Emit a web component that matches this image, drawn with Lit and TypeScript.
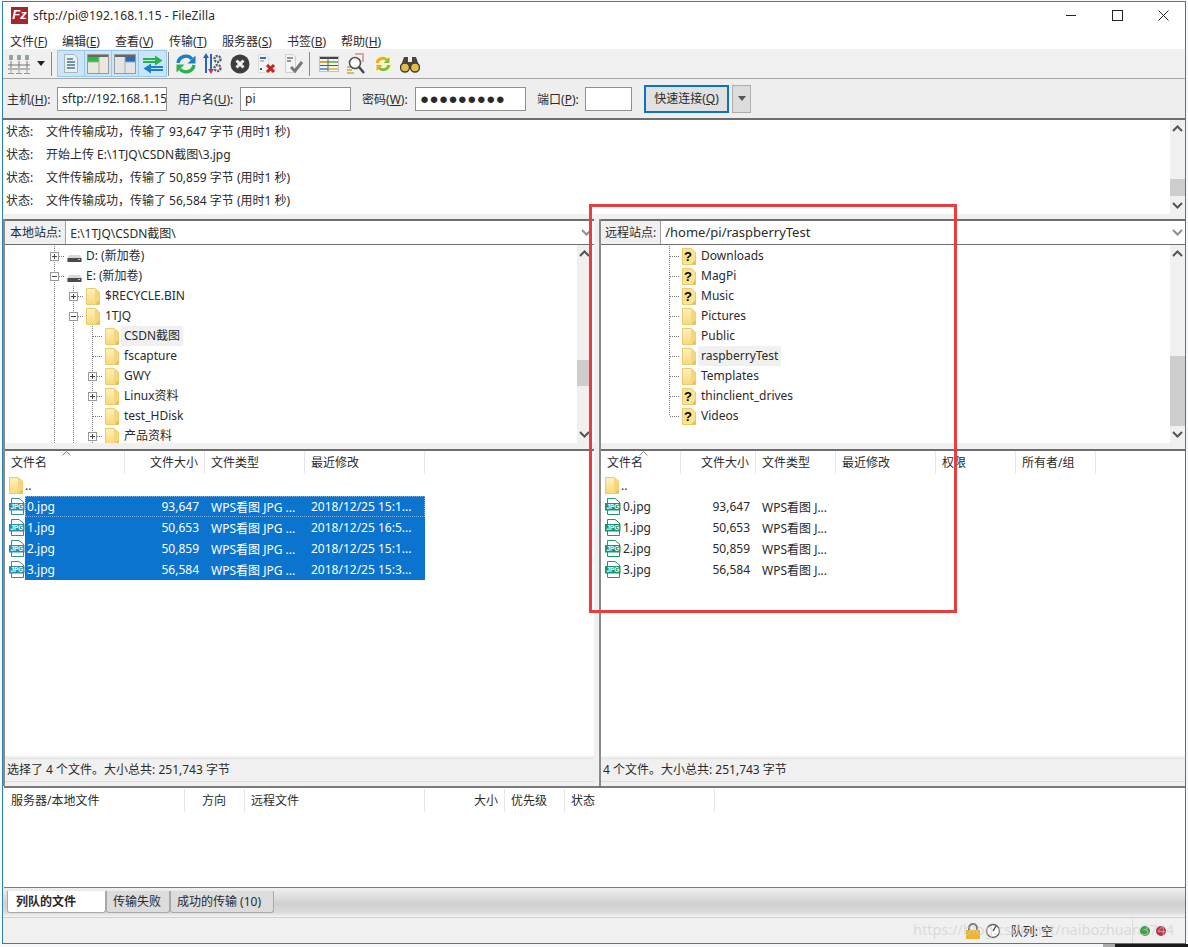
import { LitElement, css, html, svg } from "lit";
import { customElement } from "lit/decorators.js";

const folder = () => svg`<svg class="ico" width="14" height="17" viewBox="0 0 14 17">
  <defs><linearGradient id="fg" x1="0" y1="0" x2="0" y2="1"><stop offset="0" stop-color="#fff0bd"/><stop offset="1" stop-color="#f9d878"/></linearGradient></defs>
  <path d="M.5.5H9L13.5 4V16.5H.5Z" fill="url(#fg)" stroke="#eccb6c"/>
  <path d="M9 .5V16.5H13.5V4Z" fill="#f6d67c"/>
  <path d="M13.5 12L9.5 16.5H13.5Z" fill="#e6bd55"/>
</svg>`;

const unknownFolder = () => svg`<svg class="ico" width="14" height="17" viewBox="0 0 14 17">
  <path d="M.5.5H9L13.5 4V16.5H.5Z" fill="#fbe28e" stroke="#eccb6c"/>
  <path d="M13.5 12L9.5 16.5H13.5Z" fill="#e6bd55"/>
  <text x="6" y="13" text-anchor="middle" font-family="Liberation Sans" font-weight="700" font-size="13" fill="#000">?</text>
</svg>`;

const drive = () => svg`<svg class="ico" width="15" height="14" viewBox="0 0 15 14">
  <path d="M2 6H13L14.5 9V13H.5V9Z" fill="#d8d8d8"/>
  <rect x=".5" y="9" width="14" height="4" fill="#4a4a4a"/>
  <rect x="11" y="10" width="2" height="1" fill="#9fe08f"/>
</svg>`;

const jpg = (color: string) => svg`<svg class="ico" width="16" height="17" viewBox="0 0 16 17">
  <path d="M2.5.5H10L14.5 4V16.5H2.5Z" fill="#fff" stroke=${color}/>
  <rect x="0" y="5" width="15.5" height="7.5" fill=${color}/>
  <text x="7.8" y="11" text-anchor="middle" font-family="Liberation Sans" font-weight="700" font-size="6.4" fill="#fff">JPG</text>
</svg>`;

const chevron = (up: boolean) => svg`<svg width="11" height="7" viewBox="0 0 11 7">
  <path d=${up ? "M1 6L5.5 1.5L10 6" : "M1 1L5.5 5.5L10 1"} fill="none" stroke="#555" stroke-width="2"/>
</svg>`;

const toolIcons = [
  svg`<svg width="24" height="22" viewBox="0 0 24 22">
    <g fill="#8fa79a"><rect x="2" y="2" width="4" height="5"/><rect x="10" y="2" width="4" height="5"/><rect x="18" y="2" width="4" height="5"/></g>
    <g fill="none" stroke="#777"><path d="M4 8V15M12 8V15M20 8V15M1 12H23M1 16H23"/><path d="M4 17V20M12 17V20M20 17V20M1 20.5H7M9 20.5H15M17 20.5H23" stroke="#999"/></g>
  </svg>`,
  svg`<svg width="18" height="21" viewBox="0 0 18 21">
    <path d="M2.5 1.5H12L15.5 5V19.5H2.5Z" fill="#e9f1f7" stroke="#a9b4bd"/>
    <path d="M5 6H11M5 9H13M5 12H13M5 15H13" stroke="#52758f" stroke-width="1.4"/>
    <path d="M5 9H9M5 15H8" stroke="#4aa860" stroke-width="1.4"/>
  </svg>`,
  svg`<svg width="22" height="20" viewBox="0 0 22 20">
    <rect x=".5" y=".5" width="21" height="19" fill="#e8e8dc" stroke="#999"/>
    <rect x="1" y="1" width="20" height="2" fill="#666"/>
    <rect x="1" y="3" width="11" height="5" fill="#2dbb3f"/>
    <path d="M12 3V19M12 8H1" stroke="#aaa"/>
  </svg>`,
  svg`<svg width="22" height="20" viewBox="0 0 22 20">
    <rect x=".5" y=".5" width="21" height="19" fill="#e2e4e6" stroke="#999"/>
    <rect x="1" y="1" width="20" height="2" fill="#666"/>
    <rect x="11" y="3" width="10" height="5" fill="#1f6fc0"/>
    <path d="M11 3V19M11 8H21" stroke="#aaa"/>
  </svg>`,
  svg`<svg width="22" height="20" viewBox="0 0 22 20">
    <path d="M1 5H17M1 8H17" stroke="#21b54a" stroke-width="2"/><path d="M13 1.5L20.5 6.5L13 11.5Z" fill="#21b54a"/>
    <path d="M5 13H21M5 16H21" stroke="#1b7fd1" stroke-width="2"/><path d="M9 9.5L1.5 14.5L9 19.5Z" fill="#1b7fd1"/>
  </svg>`,
  svg`<svg width="20" height="20" viewBox="0 0 20 20">
    <path d="M2 9A8 8 0 0 1 16 5" fill="none" stroke="#1d7fc4" stroke-width="3.4"/><path d="M19.5 1.5V9.5H11.5Z" fill="#1d7fc4"/>
    <path d="M18 11A8 8 0 0 1 4 15" fill="none" stroke="#29b34a" stroke-width="3.4"/><path d="M.5 18.5V10.5H8.5Z" fill="#29b34a"/>
  </svg>`,
  svg`<svg width="20" height="21" viewBox="0 0 20 21">
    <path d="M3 4V20" stroke="#2b63b8" stroke-width="2"/><path d="M3 0L6 5H0Z" fill="#2b63b8"/>
    <path d="M8 1V17" stroke="#2b63b8" stroke-width="2"/><path d="M8 21L11 16H5Z" fill="#c63b3b"/>
    <circle cx="14.5" cy="6" r="3" fill="none" stroke="#55606a" stroke-width="2.4" stroke-dasharray="2 1"/>
    <circle cx="14.5" cy="15" r="3" fill="none" stroke="#55606a" stroke-width="2.4" stroke-dasharray="2 1"/>
  </svg>`,
  svg`<svg width="20" height="20" viewBox="0 0 20 20">
    <circle cx="10" cy="10" r="9.5" fill="#3d3d3d"/>
    <path d="M6.5 6.5L13.5 13.5M13.5 6.5L6.5 13.5" stroke="#f2f2f2" stroke-width="3"/>
  </svg>`,
  svg`<svg width="20" height="21" viewBox="0 0 20 21">
    <path d="M1.5 1.5H9L11.5 4V19.5H1.5Z" fill="#f4f4f4" stroke="#ddd"/>
    <path d="M3 5H9" stroke="#2c72b8" stroke-width="2"/><path d="M3 8H7" stroke="#888"/><rect x="3" y="15" width="2" height="2" fill="#555"/>
    <path d="M10 12L17 19M17 12L10 19" stroke="#c8201f" stroke-width="3"/>
  </svg>`,
  svg`<svg width="20" height="21" viewBox="0 0 20 21">
    <path d="M1.5 1.5H9L11.5 4V19.5H1.5Z" fill="#f4f4f4" stroke="#d0d0d0"/>
    <path d="M3 5H9M3 8H7" stroke="#777" stroke-width="1.4"/>
    <path d="M7 14L11 18L18 9" fill="none" stroke="#777" stroke-width="3"/>
  </svg>`,
  svg`<svg width="20" height="16" viewBox="0 0 20 16">
    <rect x=".5" y=".5" width="19" height="15" fill="#f4f4ee" stroke="#c4c4c4"/>
    <path d="M1 2H19" stroke="#444" stroke-width="2"/><path d="M1 6H9" stroke="#d2a63c" stroke-width="2"/><path d="M9 6H19" stroke="#7dbb6a" stroke-width="2"/>
    <path d="M1 9.5H19" stroke="#555"/>
    <path d="M1 13H9" stroke="#60a5d8" stroke-width="2"/><path d="M9 13H19" stroke="#e2c45a" stroke-width="2"/><path d="M9 2V15" stroke="#666"/>
  </svg>`,
  svg`<svg width="20" height="21" viewBox="0 0 20 21">
    <path d="M9 1H17V9" fill="none" stroke="#d4a9a0" stroke-width="2"/>
    <path d="M1 14H5M1 17H6M1 20H8" stroke="#d8a23d" stroke-width="1.4"/>
    <circle cx="9" cy="10" r="5.5" fill="#fff" stroke="#555" stroke-width="1.6"/>
    <path d="M13 14L18 20" stroke="#444" stroke-width="2.4"/>
  </svg>`,
  svg`<svg width="18" height="18" viewBox="0 0 18 18">
    <rect x="1" y="1" width="16" height="16" fill="#fdf6c9"/>
    <path d="M3 8A6 6 0 0 1 13 5" fill="none" stroke="#e9a825" stroke-width="3"/><path d="M15.5 2V8H9.5Z" fill="#7cc04a"/>
    <path d="M15 10A6 6 0 0 1 5 13" fill="none" stroke="#79bd4a" stroke-width="3"/><path d="M2.5 16V10H8.5Z" fill="#e9a825"/>
  </svg>`,
  svg`<svg width="20" height="18" viewBox="0 0 20 18">
    <path d="M4 2H8V7H12V2H16L19.5 12H.5Z" fill="#4a443c"/>
    <circle cx="5" cy="12.5" r="4.5" fill="#e5bd45" stroke="#453f36" stroke-width="1.4"/>
    <circle cx="15" cy="12.5" r="4.5" fill="#e5bd45" stroke="#453f36" stroke-width="1.4"/>
  </svg>`,
];

const menus: [string, string, number][] = [
  ["文件", "F", 52],
  ["编辑", "E", 53],
  ["查看", "V", 54],
  ["传输", "T", 53],
  ["服务器", "S", 65],
  ["书签", "B", 54],
  ["帮助", "H", 50],
];

const logLines = [
  "文件传输成功，传输了 93,647 字节 (用时1 秒)",
  "开始上传 E:\\1TJQ\\CSDN截图\\3.jpg",
  "文件传输成功，传输了 50,859 字节 (用时1 秒)",
  "文件传输成功，传输了 56,584 字节 (用时1 秒)",
];

type Col = { label: string; width: number; right?: boolean; pad?: number };

const localCols: Col[] = [
  { label: "文件名", width: 120 },
  { label: "文件大小", width: 80, right: true },
  { label: "文件类型", width: 100 },
  { label: "最近修改", width: 120 },
];
const remoteCols: Col[] = [
  { label: "文件名", width: 80 },
  { label: "文件大小", width: 75, right: true },
  { label: "文件类型", width: 80 },
  { label: "最近修改", width: 100 },
  { label: "权限", width: 80 },
  { label: "所有者/组", width: 80 },
];
const queueCols: Col[] = [
  { label: "服务器/本地文件", width: 180 },
  { label: "方向", width: 60, right: true, pad: 18 },
  { label: "远程文件", width: 180 },
  { label: "大小", width: 80, right: true },
  { label: "优先级", width: 60 },
  { label: "状态", width: 150 },
];

const files = [
  ["0.jpg", "93,647", "2018/12/25 15:1..."],
  ["1.jpg", "50,653", "2018/12/25 16:5..."],
  ["2.jpg", "50,859", "2018/12/25 15:1..."],
  ["3.jpg", "56,584", "2018/12/25 15:3..."],
];

type TreeRow = {
  name: string;
  level: number;
  icon: "drive" | "folder" | "unknown";
  box?: "+" | "-";
  active?: boolean;
  last?: boolean;
};

const localTree: TreeRow[] = [
  { name: "D: (新加卷)", level: 0, icon: "drive", box: "+" },
  { name: "E: (新加卷)", level: 0, icon: "drive", box: "-" },
  { name: "$RECYCLE.BIN", level: 1, icon: "folder", box: "+" },
  { name: "1TJQ", level: 1, icon: "folder", box: "-" },
  { name: "CSDN截图", level: 2, icon: "folder", active: true },
  { name: "fscapture", level: 2, icon: "folder" },
  { name: "GWY", level: 2, icon: "folder", box: "+" },
  { name: "Linux资料", level: 2, icon: "folder", box: "+" },
  { name: "test_HDisk", level: 2, icon: "folder" },
  { name: "产品资料", level: 2, icon: "folder", box: "+" },
];

const remoteTree: TreeRow[] = [
  { name: "Downloads", level: 0, icon: "unknown" },
  { name: "MagPi", level: 0, icon: "unknown" },
  { name: "Music", level: 0, icon: "unknown" },
  { name: "Pictures", level: 0, icon: "folder" },
  { name: "Public", level: 0, icon: "folder" },
  { name: "raspberryTest", level: 0, icon: "folder", active: true },
  { name: "Templates", level: 0, icon: "folder" },
  { name: "thinclient_drives", level: 0, icon: "unknown" },
  { name: "Videos", level: 0, icon: "unknown", last: true },
];

const quickFields = [
  { label: "主机", key: "H", labelWidth: 50, width: 110, value: "sftp://192.168.1.15" },
  { label: "用户名", key: "U", labelWidth: 62, width: 111, value: "pi" },
  { label: "密码", key: "W", labelWidth: 53, width: 111, value: "●●●●●●●●●", dots: true },
  { label: "端口", key: "P", labelWidth: 48, width: 47, value: "" },
];

@customElement("app-root")
export class AppRoot extends LitElement {
  static styles = css`
    :host {
      display: block;
      position: relative;
      width: 1188px;
      height: 947px;
      overflow: hidden;
      background: #f6f8f9;
      font-family: "Noto Sans", "Noto Sans CJK SC", sans-serif;
      font-size: 12px;
      color: #2a2a2a;
    }
    * {
      box-sizing: border-box;
    }
    .window {
      margin: 1px 2px 0 2px;
      width: 1184px;
      height: 943px;
      border: 1px solid #2f84ad;
      background: #f0f0f0;
      display: flex;
      flex-direction: column;
      overflow: hidden;
    }
    .under {
      display: flex;
      justify-content: flex-end;
      height: 3px;
    }
    .under i {
      width: 85px;
      background: #1a1a1a;
      border-left: 12px solid #aaa;
    }
    .titlebar {
      height: 28px;
      background: #fff;
      display: flex;
      align-items: center;
      padding: 0 0 2px 8px;
      gap: 5px;
      flex: none;
    }
    .logo {
      width: 17px;
      height: 17px;
      background: #a8252a;
      color: #fff;
      font: italic 700 13px/16px "Liberation Sans", sans-serif;
      text-align: center;
      flex: none;
    }
    .title {
      flex: 1;
      font-size: 12px;
      letter-spacing: 0.1px;
    }
    .winbtns {
      display: flex;
      align-self: flex-start;
      margin: 5px -1px 0 0;
    }
    .winbtns span {
      width: 46px;
      height: 16px;
      display: flex;
      align-items: center;
      justify-content: center;
    }
    .menubar {
      height: 19px;
      background: #fff;
      display: flex;
      padding: 2px 0 0 7px;
      align-items: center;
      flex: none;
    }
    .menubar span {
      flex: none;
      white-space: nowrap;
    }
    .toolbar {
      height: 30px;
      background: #f0f0f0;
      border-bottom: 1px solid #a6a6a6;
      display: flex;
      align-items: center;
      flex: none;
      padding-left: 4px;
    }
    .tool {
      width: 27px;
      height: 27px;
      display: flex;
      align-items: center;
      justify-content: center;
      flex: none;
    }
    .toolgroup {
      display: flex;
      background: #cce4f7;
      border: 1px solid #99c9ef;
      height: 27px;
      margin: 0 1px;
      flex: none;
    }
    .toolgroup .tool {
      height: 25px;
      border-right: 1px solid #99c9ef;
    }
    .toolgroup .tool:last-child {
      border-right: none;
    }
    .drop {
      width: 0;
      height: 0;
      border: 4px solid transparent;
      border-top: 5px solid #222;
      border-bottom: none;
      margin: 0 6px;
      flex: none;
    }
    .tsep {
      width: 1px;
      height: 24px;
      background: #888;
      flex: none;
    }
    .tsep.a {
      margin-right: 4px;
    }
    .tsep.b {
      margin-right: 3px;
    }
    .tsep.c {
      margin: 0 5px 0 2px;
    }
    .quickbar {
      background: #eee;
      border-bottom: 2px solid #6e6e6e;
      height: 41px;
      display: flex;
      align-items: center;
      padding-left: 4px;
      flex: none;
    }
    .qlabel {
      white-space: nowrap;
      flex: none;
    }
    .qinput {
      height: 24px;
      background: #fff;
      border: 1px solid #8f8f8f;
      padding: 0 4px;
      line-height: 22px;
      overflow: hidden;
      white-space: nowrap;
      margin-right: 11px;
      flex: none;
    }
    .qinput.dots {
      font-size: 15px;
      letter-spacing: 0.4px;
      font-family: "Liberation Sans", sans-serif;
      font-weight: 700;
      line-height: 21px;
    }
    .qbtn {
      width: 85px;
      height: 28px;
      margin-left: 1px;
      border: 2px solid #0a74c8;
      background: #e1e1e1;
      text-align: center;
      line-height: 24px;
      flex: none;
    }
    .qdrop {
      width: 19px;
      height: 28px;
      margin-left: 3px;
      background: #dcdcdc;
      border: 1px solid #adadad;
      display: flex;
      align-items: center;
      justify-content: center;
    }
    .qdrop i {
      width: 0;
      height: 0;
      border: 4px solid transparent;
      border-top: 5px solid #555;
      border-bottom: none;
    }
    .log {
      height: 94px;
      background: #fff;
      display: flex;
      padding-left: 1px;
      flex: none;
      margin-left: 1px;
    }
    .loglines {
      flex: 1;
      padding-left: 1px;
    }
    .logline {
      height: 23px;
      line-height: 24px;
      display: flex;
    }
    .logline b {
      font-weight: 400;
      width: 40px;
      flex: none;
    }
    .scroll {
      width: 15px;
      background: #f0f0f0;
      display: flex;
      flex-direction: column;
      flex: none;
    }
    .scroll .arrow {
      height: 17px;
      display: flex;
      align-items: center;
      justify-content: center;
      flex: none;
    }
    .scroll .thumb {
      background: #cdcdcd;
      flex: none;
    }
    .scroll .fill {
      flex: 1;
    }
    .logtail {
      height: 5px;
      flex: none;
    }
    .main {
      height: 567px;
      display: flex;
      flex: none;
    }
    .pane {
      display: flex;
      flex-direction: column;
      flex: none;
    }
    .pane.local {
      width: 591px;
      margin-right: 5px;
    }
    .pane.local .scroll {
      margin-right: 2px;
    }
    .pane.local .sitelabel {
      padding-left: 5px;
    }
    .pane.remote {
      flex: 1;
    }
    .inner {
      flex: 1;
      display: flex;
      flex-direction: column;
      border-left: 2px solid #8a8a8a;
      min-height: 0;
    }
    .sitebar {
      height: 26px;
      border-top: 2px solid #6e6e6e;
      border-bottom: 1px solid #6e6e6e;
      background: #fff;
      display: flex;
      align-items: center;
      flex: none;
    }
    .sitelabel {
      height: 23px;
      line-height: 24px;
      padding: 0 4px;
      background: #f0f0f0;
      border-right: 1px solid #a0a0a0;
      flex: none;
    }
    .sitepath {
      flex: 1;
      padding-left: 4px;
      white-space: nowrap;
    }
    .sitepath.big {
      font-size: 13px;
      padding-bottom: 1px;
    }
    .sitechev {
      width: 16px;
      flex: none;
      display: flex;
      justify-content: center;
      opacity: 0.65;
    }
    .tree {
      height: 198px;
      background: #fff;
      display: flex;
      flex: none;
      overflow: hidden;
    }
    .rows {
      flex: 1;
      overflow: hidden;
      padding-top: 1px;
    }
    .tr {
      height: 20px;
      display: flex;
      align-items: center;
    }
    .cell {
      width: 19px;
      height: 20px;
      flex: none;
      display: flex;
      align-items: center;
      justify-content: center;
      background-repeat: no-repeat;
    }
    .cell.v {
      background-image: repeating-linear-gradient(to bottom, #777 0 1px, transparent 1px 2px);
      background-size: 1px 100%;
      background-position: center;
    }
    .cell.c {
      background-image:
        repeating-linear-gradient(to right, #777 0 1px, transparent 1px 2px),
        repeating-linear-gradient(to bottom, #777 0 1px, transparent 1px 2px);
      background-size: 50% 1px, 1px 100%;
      background-position: right center, center;
    }
    .cell.end {
      background-image:
        repeating-linear-gradient(to right, #777 0 1px, transparent 1px 2px),
        repeating-linear-gradient(to bottom, #777 0 1px, transparent 1px 2px);
      background-size: 50% 1px, 1px 50%;
      background-position: right center, center top;
    }
    .icell {
      width: 19px;
      flex: none;
      display: flex;
      align-items: center;
      padding-left: 3px;
    }
    .ico {
      display: block;
      flex: none;
    }
    .box {
      width: 9px;
      height: 9px;
      background: #fff;
      border: 1px solid #999;
      display: flex;
      align-items: center;
      justify-content: center;
    }
    .box svg {
      display: block;
    }
    .tname {
      padding: 0 3px;
      height: 20px;
      line-height: 19px;
      white-space: nowrap;
    }
    .tname.active {
      background: #f0f0f0;
    }
    .split {
      height: 6px;
      flex: none;
    }
    .list {
      flex: 1;
      background: #fff;
      border-top: 2px solid #6e6e6e;
      min-height: 0;
      display: flex;
      flex-direction: column;
    }
    .thead {
      height: 24px;
      display: flex;
      position: relative;
      flex: none;
    }
    .th {
      height: 23px;
      padding: 0 6px;
      line-height: 24px;
      border-right: 1px solid #e6e6e6;
      white-space: nowrap;
      flex: none;
    }
    .th.right {
      text-align: right;
    }
    .caret {
      position: absolute;
      top: 0;
      width: 9px;
      height: 5px;
    }
    .lrow {
      height: 21px;
      display: flex;
      align-items: center;
      flex: none;
    }
    .lcell {
      padding: 0 6px;
      white-space: nowrap;
      overflow: hidden;
      flex: none;
    }
    .lcell.right {
      text-align: right;
    }
    .fname {
      display: flex;
      align-items: center;
      padding-left: 4px;
      height: 21px;
      flex: none;
    }
    .fname span {
      padding-left: 2px;
    }
    .lselected {
      display: flex;
      flex: 1;
      align-items: center;
      height: 21px;
      background: #0b74cf;
      color: #fff;
    }
    .lrow.focus .lselected {
      outline: 1px dotted #7fb5e6;
      outline-offset: -1px;
    }
    .status {
      height: 24px;
      margin-top: 2px;
      background: #f0f0f0;
      border-top: 1px solid #e4e4e4;
      border-bottom: 1px solid #dcdcdc;
      line-height: 21px;
      padding-left: 2px;
      flex: none;
    }
    .statusgap {
      height: 4px;
      flex: none;
    }
    .queue {
      height: 102px;
      background: #fff;
      border-top: 2px solid #7a7a7a;
      border-bottom: 1px solid #7a7a7a;
      margin-left: 1px;
      padding: 1px 0 0 1px;
      flex: none;
    }
    .tabs {
      height: 30px;
      background: linear-gradient(to bottom, #f0f0f0 0, #cfcfcf 55%, #dcdcdc 85%, #f4f4f4 100%);
      border-bottom: 1px solid #d0d0d0;
      display: flex;
      align-items: flex-start;
      padding: 3px 0 0 4px;
      flex: none;
    }
    .tab {
      height: 22px;
      line-height: 22px;
      padding: 0 5px;
      background: #dcdcdc;
      border: 1px solid #a8a8a8;
      border-top: none;
      border-radius: 0 0 3px 3px;
      white-space: nowrap;
      flex: none;
    }
    .tab.on {
      width: 99px;
      background: #fff;
      font-weight: 700;
      padding-left: 8px;
    }
    .tab.failed {
      width: 64px;
      padding-left: 6px;
    }
    .tab.done {
      width: 104px;
      padding-left: 6px;
    }
    .bottom {
      flex: 1;
      display: flex;
      align-items: center;
      justify-content: flex-end;
      background: #f0f0f0;
    }
    .bottom svg {
      display: block;
      flex: none;
    }
    .lock {
      margin-right: 4px;
    }
    .leds {
      margin-left: 6px;
    }
    .qstate {
      margin: 0 79px 0 10px;
      white-space: nowrap;
    }
    .bsep {
      width: 1px;
      height: 24px;
      background: #ddd;
    }
    .grip {
      width: 14px;
    }
    .redbox {
      position: absolute;
      left: 589px;
      top: 204px;
      width: 368px;
      height: 409px;
      border: 3px solid #e5403f;
      pointer-events: none;
    }
    .watermark {
      position: absolute;
      left: 913px;
      top: 919px;
      font-size: 14.5px;
      line-height: 20px;
      color: rgba(205, 205, 205, 0.65);
      white-space: nowrap;
    }
  `;

  treeRow(row: TreeRow) {
    const guides = Array.from({ length: row.level }, () => html`<span class="cell v"></span>`);
    const linkClass = row.last ? "end" : "c";
    return html`<div class="tr">
      ${guides}
      <span class="cell ${linkClass}">
        ${row.box
          ? html`<span class="box"
              ><svg width="7" height="7" viewBox="0 0 7 7">
                <path d=${row.box === "+" ? "M1 3.5H6M3.5 1V6" : "M1 3.5H6"} stroke="#444" /></svg
            ></span>`
          : ""}
      </span>
      <span class="icell">
        ${row.icon === "drive" ? drive() : row.icon === "unknown" ? unknownFolder() : folder()}
      </span>
      <span class="tname ${row.active ? "active" : ""}">${row.name}</span>
    </div>`;
  }

  scrollbar(top: number, thumb: number) {
    return html`<div class="scroll">
      <span class="arrow">${chevron(true)}</span>
      <span style="height:${top}px;flex:none"></span>
      <span class="thumb" style="height:${thumb}px"></span>
      <span class="fill"></span>
      <span class="arrow">${chevron(false)}</span>
    </div>`;
  }

  header(cols: Col[], caretAt?: number) {
    return html`<div class="thead">
      ${cols.map(
        (c) => html`<div
          class="th ${c.right ? "right" : ""}"
          style="width:${c.width}px;${c.pad ? `padding-right:${c.pad}px` : ""}"
        >
          ${c.label}
        </div>`
      )}
      ${caretAt !== undefined
        ? html`<svg class="caret" style="left:${caretAt}px" viewBox="0 0 9 5">
            <path d="M.5 4.5L4.5 .5L8.5 4.5" fill="none" stroke="#888" />
          </svg>`
        : ""}
    </div>`;
  }

  localList() {
    return html`<div class="list">
      ${this.header(localCols, 57)}
      <div class="lrow"><span class="fname">${folder()}<span>..</span></span></div>
      ${files.map(
        (f, i) => html`<div class="lrow ${i === 0 ? "focus" : ""}" style="width:420px">
          <span class="fname">${jpg("#2f8da0")}</span>
          <span class="lselected">
            <span class="lcell" style="width:100px;padding-left:2px">${f[0]}</span>
            <span class="lcell right" style="width:80px">${f[1]}</span>
            <span class="lcell" style="width:100px">WPS看图 JPG ...</span>
            <span class="lcell" style="width:120px">${f[2]}</span>
          </span>
        </div>`
      )}
    </div>`;
  }

  remoteList() {
    return html`<div class="list">
      ${this.header(remoteCols, 38)}
      <div class="lrow"><span class="fname">${folder()}<span>..</span></span></div>
      ${files.map(
        (f) => html`<div class="lrow">
          <span class="fname" style="width:80px">${jpg("#1f9468")}<span style="padding-left:2px">${f[0]}</span></span>
          <span class="lcell right" style="width:75px">${f[1]}</span>
          <span class="lcell" style="width:80px">WPS看图 J...</span>
        </div>`
      )}
    </div>`;
  }

  render() {
    return html`
      <div class="window">
        <div class="titlebar">
          <span class="logo">Fz</span>
          <span class="title">sftp://pi@192.168.1.15 - FileZilla</span>
          <span class="winbtns">
            <span><svg width="10" height="10"><path d="M0 5.5H10" stroke="#222" /></svg></span>
            <span><svg width="11" height="11"><rect x=".5" y=".5" width="10" height="10" fill="none" stroke="#222" /></svg></span>
            <span><svg width="11" height="11"><path d="M.5 .5L10.5 10.5M10.5 .5L.5 10.5" stroke="#222" /></svg></span>
          </span>
        </div>
        <div class="menubar">
          ${menus.map((m) => html`<span style="width:${m[2]}px">${m[0]}(<u>${m[1]}</u>)</span>`)}
        </div>
        <div class="toolbar">
          ${toolIcons[0]}
          <span class="drop"></span>
          <span class="tsep a"></span>
          <span class="toolgroup">
            ${toolIcons.slice(1, 5).map((i) => html`<span class="tool">${i}</span>`)}
          </span>
          <span class="tsep b"></span>
          ${toolIcons.slice(5, 10).map((i) => html`<span class="tool">${i}</span>`)}
          <span class="tsep c"></span>
          ${toolIcons.slice(10).map((i) => html`<span class="tool">${i}</span>`)}
        </div>
        <div class="quickbar">
          ${quickFields.map(
            (f) => html`<span class="qlabel" style="width:${f.labelWidth}px">${f.label}(<u>${f.key}</u>):</span>
              <span class="qinput ${f.dots ? "dots" : ""}" style="width:${f.width}px">${f.value}</span>`
          )}
          <span class="qbtn">快速连接(<u>Q</u>)</span>
          <span class="qdrop"><i></i></span>
        </div>
        <div class="log">
          <div class="loglines">
            ${logLines.map((l) => html`<div class="logline"><b>状态:</b><span>${l}</span></div>`)}
          </div>
          ${this.scrollbar(42, 17)}
        </div>
        <div class="logtail"></div>
        <div class="main">
          <div class="pane local">
            <div class="inner">
              <div class="sitebar">
                <span class="sitelabel">本地站点:</span>
                <span class="sitepath">E:\\1TJQ\\CSDN截图\\</span>
                <span class="sitechev">${chevron(false)}</span>
              </div>
              <div class="tree">
                <div class="rows" style="padding-left:40px">${localTree.map((r) => this.treeRow(r))}</div>
                ${this.scrollbar(98, 26)}
              </div>
              <div class="split"></div>
              ${this.localList()}
              <div class="status">选择了 4 个文件。大小总共: 251,743 字节</div>
              <div class="statusgap"></div>
            </div>
          </div>
          <div class="pane remote">
            <div class="inner">
              <div class="sitebar">
                <span class="sitelabel">远程站点:</span>
                <span class="sitepath big">/home/pi/raspberryTest</span>
                <span class="sitechev">${chevron(false)}</span>
              </div>
              <div class="tree">
                <div class="rows" style="padding-left:59px">${remoteTree.map((r) => this.treeRow(r))}</div>
                ${this.scrollbar(94, 70)}
              </div>
              <div class="split"></div>
              ${this.remoteList()}
              <div class="status">4 个文件。大小总共: 251,743 字节</div>
              <div class="statusgap"></div>
            </div>
          </div>
        </div>
        <div class="queue">${this.header(queueCols)}</div>
        <div class="tabs">
          <span class="tab on">列队的文件</span>
          <span class="tab failed">传输失败</span>
          <span class="tab done">成功的传输 (10)</span>
        </div>
        <div class="bottom">
          <svg class="lock" width="16" height="16" viewBox="0 0 16 16">
            <path d="M4 8V5A4 4 0 0 1 12 5V8" fill="none" stroke="#777" stroke-width="2" />
            <rect x="1" y="7" width="14" height="9" fill="#eeb52f" />
          </svg>
          <svg width="16" height="16" viewBox="0 0 16 16">
            <circle cx="8" cy="8" r="6.5" fill="#fff" stroke="#666" stroke-width="1.4" />
            <path d="M8 8L11 3" stroke="#444" stroke-width="1.4" />
          </svg>
          <span class="qstate">队列: 空</span>
          <span class="bsep"></span>
          <svg class="leds" width="32" height="12" viewBox="0 0 32 12">
            <circle cx="6" cy="6" r="5" fill="#3f9f45" />
            <circle cx="22" cy="6" r="5" fill="#b5333c" />
          </svg>
          <span class="grip"></span>
        </div>
      </div>
      <div class="under"><i></i></div>
      <div class="redbox"></div>
      <div class="watermark">https://blog.csdn.net/naibozhuan3744</div>
    `;
  }
}

declare global {
  interface HTMLElementTagNameMap {
    "app-root": AppRoot;
  }
}
